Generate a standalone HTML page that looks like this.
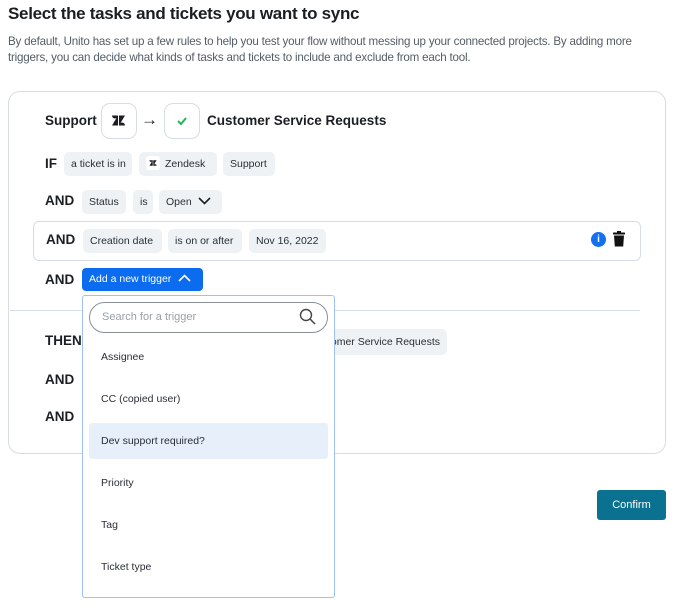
<!DOCTYPE html>
<html><head><meta charset="utf-8"><style>
*{margin:0;padding:0;box-sizing:border-box}
body{width:683px;height:614px;background:#fff;font-family:"Liberation Sans",sans-serif;color:#1b1f24;position:relative;overflow:hidden}
.a{position:absolute;white-space:nowrap}
.chip{position:absolute;height:24px;background:#eff2f5;border-radius:5px;font-size:10.5px;line-height:24px;padding:0 7px;color:#2a2f36;white-space:nowrap}
.k{position:absolute;font-weight:bold;font-size:13.5px;white-space:nowrap}
.item{position:absolute;left:101px;font-size:10.5px;color:#2a2f36}
</style></head><body>
<div class="a" style="left:8px;top:4px;font-size:17px;font-weight:bold;letter-spacing:-0.3px">Select the tasks and tickets you want to sync</div>
<div class="a" style="left:8px;top:34px;font-size:11.6px;color:#555c66;line-height:16px;letter-spacing:-0.2px">By default, Unito has set up a few rules to help you test your flow without messing up your connected projects. By adding more<br>triggers, you can decide what kinds of tasks and tickets to include and exclude from each tool.</div>

<div class="a" style="left:8px;top:91px;width:658px;height:363px;border:1px solid #d6dde6;border-radius:12px"></div>

<div class="k" style="left:45px;top:113px">Support</div>
<div class="a" style="left:101px;top:103px;width:36px;height:36px;border:1px solid #d6dde6;border-radius:9px"></div>
<svg class="a" style="left:112px;top:115px" width="13" height="11" viewBox="0 0 13 11"><path d="M0 0.5h6A3 3 0 0 1 0 0.5z" fill="#1b1f24"/><path d="M7 0.5h6L7 10.5z" fill="#1b1f24"/><path d="M6 0.5L0 10.5h6z" fill="#1b1f24"/><path d="M7 10.5a3 3 0 0 1 6 0z" fill="#1b1f24"/></svg>
<div class="a" style="left:141px;top:110px;font-size:17px">→</div>
<div class="a" style="left:164px;top:103px;width:36px;height:36px;border:1px solid #d6dde6;border-radius:9px"></div>
<svg class="a" style="left:177px;top:117px" width="10" height="8" viewBox="0 0 10 8"><path d="M1 4l3 3 5-6" fill="none" stroke="#22b45a" stroke-width="2"/></svg>
<div class="k" style="left:207px;top:113px">Customer Service Requests</div>

<div class="k" style="left:45px;top:156px">IF</div>
<div class="chip" style="left:64px;top:152px;width:68px">a ticket is in</div>
<div class="chip" style="left:139px;top:152px;width:78px"><span style="display:inline-block;width:14px;height:14px;background:#fff;border-radius:3px;vertical-align:-3px;margin-right:5px;position:relative"><svg style="position:absolute;left:3px;top:4px" width="8" height="6" viewBox="0 0 13 11"><path d="M0 0.5h6A3 3 0 0 1 0 0.5z" fill="#1b1f24"/><path d="M7 0.5h6L7 10.5z" fill="#1b1f24"/><path d="M6 0.5L0 10.5h6z" fill="#1b1f24"/><path d="M7 10.5a3 3 0 0 1 6 0z" fill="#1b1f24"/></svg></span>Zendesk</div>
<div class="chip" style="left:223px;top:152px;width:52px">Support</div>

<div class="k" style="left:45px;top:193px">AND</div>
<div class="chip" style="left:82px;top:190px;width:44px">Status</div>
<div class="chip" style="left:133px;top:190px;width:20px">is</div>
<div class="chip" style="left:159px;top:190px;width:63px">Open <svg width="13" height="8" style="margin-left:3px" viewBox="0 0 13 8"><path d="M1 1l5.5 5.5L12 1" fill="none" stroke="#1b1f24" stroke-width="1.6"/></svg></div>

<div class="a" style="left:33px;top:221px;width:608px;height:40px;border:1px solid #d6dde6;border-radius:6px"></div>
<div class="k" style="left:46px;top:232px">AND</div>
<div class="chip" style="left:83px;top:229px;width:79px">Creation date</div>
<div class="chip" style="left:168px;top:229px;width:74px">is on or after</div>
<div class="chip" style="left:249px;top:229px;width:77px">Nov 16, 2022</div>
<div class="a" style="left:591px;top:232px;width:15px;height:15px;border-radius:50%;background:#1470ef;color:#fff;font-size:10px;font-weight:bold;text-align:center;line-height:15px">i</div>
<svg class="a" style="left:613px;top:231px" width="12" height="16" viewBox="0 0 12 16"><rect x="0" y="1.5" width="12" height="2" rx="0.5" fill="#111"/><rect x="4" y="0" width="4" height="2" fill="#111"/><path d="M1 4.5h10l-0.8 11h-8.4z" fill="#111"/></svg>

<div class="k" style="left:45px;top:272px">AND</div>
<div class="a" style="left:82px;top:268px;width:121px;height:23px;background:#0b6cf0;border-radius:4px;color:#fff;font-size:10.5px;line-height:23px;padding-left:7px">Add a new trigger <svg width="13" height="8" style="margin-left:4px" viewBox="0 0 13 8"><path d="M1 7l5.5-5.5L12 7" fill="none" stroke="#fff" stroke-width="1.6"/></svg></div>

<div class="a" style="left:10px;top:310px;width:630px;height:1px;background:#d6dde6"></div>

<div class="k" style="left:45px;top:333px">THEN</div>
<div class="chip" style="left:300px;top:329px;width:147px;height:26px;line-height:26px;text-align:right">Customer Service Requests</div>
<div class="k" style="left:45px;top:372px">AND</div>
<div class="k" style="left:45px;top:409px">AND</div>

<div class="a" style="left:82px;top:295px;width:253px;height:303px;background:#fff;border:1px solid #9cc1f2;border-radius:3px"></div>
<div class="a" style="left:89px;top:302px;width:239px;height:31px;border:1px solid #8a9099;border-radius:16px;font-size:11px;color:#9aa0a8;line-height:29px;padding-left:12px">Search for a trigger</div>
<svg class="a" style="left:299px;top:308px" width="17" height="17" viewBox="0 0 17 17"><circle cx="7" cy="7" r="5.5" fill="none" stroke="#444" stroke-width="1.4"/><path d="M11 11l5 5" stroke="#444" stroke-width="1.5"/></svg>
<div class="item" style="top:351px">Assignee</div>
<div class="item" style="top:393px">CC (copied user)</div>
<div class="a" style="left:89px;top:423px;width:239px;height:36px;background:#e7effb;border-radius:3px"></div>
<div class="item" style="top:435px">Dev support required?</div>
<div class="item" style="top:477px">Priority</div>
<div class="item" style="top:519px">Tag</div>
<div class="item" style="top:561px">Ticket type</div>

<div class="a" style="left:597px;top:490px;width:69px;height:30px;background:#0a7191;border-radius:3px;color:#fff;font-size:11px;line-height:30px;text-align:center">Confirm</div>
</body></html>
